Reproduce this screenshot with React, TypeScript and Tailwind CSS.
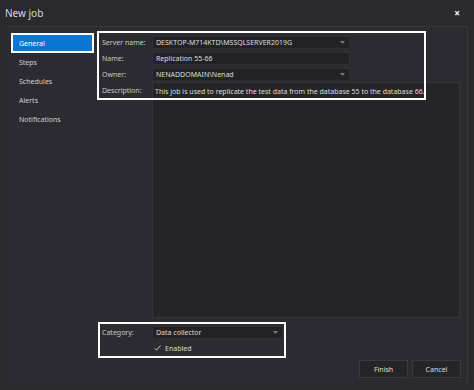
import React from "react";

function Caret() {
  return (
    <svg width="5" height="3" viewBox="0 0 5 3" className="shrink-0">
      <path d="M0 0 L5 0 L2.5 3 Z" fill="#7a7a7e" />
    </svg>
  );
}

function Row({ label, children }: { label: string; children: React.ReactNode }) {
  return (
    <div className="flex items-center h-[16px]">
      <div className="w-[56px] pl-[6px] text-[#c9c9cc] whitespace-nowrap">{label}</div>
      {children}
    </div>
  );
}

export default function App() {
  const nav = ["Steps", "Schedules", "Alerts", "Notifications"];
  return (
    <div className="relative w-[474px] h-[390px] bg-[#2a292e] text-[#dedede] text-[7px] leading-none flex flex-col overflow-hidden font-['Noto_Sans',sans-serif]">
      {/* title bar */}
      <div className="h-[26px] flex items-center justify-between pl-[5px] pr-[14px] shrink-0">
        <span className="text-[10px] text-[#d8d8d8]">New job</span>
        <span className="text-[10px] font-bold text-white">×</span>
      </div>
      {/* body */}
      <div className="ml-[8px] mr-[6px] h-[357px] border-t border-r border-[#38373d] flex bg-[#2c2b31]">
        {/* sidebar */}
        <div className="w-[88px] pt-[6px] pl-[3px] flex flex-col shrink-0 text-[7px]">
          <div className="h-[20px] w-[83px] bg-[#0a77d5] border-2 border-white flex items-center pl-[6px] text-white">
            General
          </div>
          {nav.map((n) => (
            <div key={n} className="h-[19px] flex items-center pl-[8px] text-[#d0d0d3]">
              {n}
            </div>
          ))}
        </div>
        {/* main */}
        <div className="flex-1 flex flex-col pt-[7px]">
          <Row label="Server name:">
            <div className="w-[198px] h-[13px] bg-[#222225] border border-[#303034] flex items-center justify-between pl-[3px] pr-[4px]">
              <span className="whitespace-nowrap">DESKTOP-M714KTD\MSSQLSERVER2019G</span>
              <Caret />
            </div>
          </Row>
          <Row label="Name:">
            <div className="w-[198px] h-[13px] bg-[#222225] border border-[#303034] flex items-center pl-[3px]">
              Replication 55-66
            </div>
          </Row>
          <Row label="Owner:">
            <div className="w-[198px] h-[13px] bg-[#222225] border border-[#303034] flex items-center justify-between pl-[3px] pr-[4px]">
              <span>NENADDOMAIN\Nenad</span>
              <Caret />
            </div>
          </Row>
          <div className="flex h-[236px]">
            <div className="w-[56px] pl-[6px] pt-[5px] text-[#c9c9cc] whitespace-nowrap">Description:</div>
            <div className="w-[308px] bg-[#252528] border border-[#36353b] pl-[2px] pt-[5px] whitespace-nowrap">
              This job is used to replicate the test data from the database 55 to the database 66.
            </div>
          </div>
          <div className="flex items-center h-[13px] mt-[8px]">
            <div className="w-[56px] pl-[6px] text-[#c9c9cc]">Category:</div>
            <div className="w-[131px] h-[13px] bg-[#222225] border border-[#303034] flex items-center justify-between pl-[3px] pr-[4px]">
              <span>Data collector</span>
              <Caret />
            </div>
          </div>
          <div className="flex items-center h-[12px] mt-[3px] pl-[58px] gap-[4px]">
            <svg width="7" height="6" viewBox="0 0 7 6">
              <path d="M0.5 3.2 L2.5 5.2 L6.5 0.5" stroke="#d0d0d0" strokeWidth="0.9" fill="none" />
            </svg>
            <span>Enabled</span>
          </div>
          <div className="flex justify-end gap-[4px] mt-[6px] pr-[6px]">
            <div className="w-[49px] h-[18px] bg-[#252528] border border-[#3a393f] flex items-center justify-center">Finish</div>
            <div className="w-[49px] h-[18px] bg-[#252528] border border-[#3a393f] flex items-center justify-center">Cancel</div>
          </div>
        </div>
      </div>
      {/* annotation overlays */}
      <div className="absolute left-[97px] top-[31px] w-[329px] h-[69px] border-2 border-white pointer-events-none" />
      <div className="absolute left-[98px] top-[322px] w-[188px] h-[36px] border-2 border-white pointer-events-none" />
    </div>
  );
}
